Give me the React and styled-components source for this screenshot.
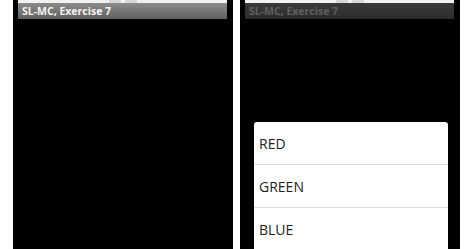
import React from 'react';
import styled, { createGlobalStyle } from 'styled-components';

const GlobalStyle = createGlobalStyle`
  html, body {
    margin: 0;
    padding: 0;
    background: #ffffff;
    overflow: hidden;
  }
`;

const colors = ['RED', 'GREEN', 'BLUE'];

function Phone({ dimmed, children }) {
  return (
    <Screen>
      <StatusStrip>
        <StatusIcons>
          <StatusDot />
          <StatusDot />
        </StatusIcons>
      </StatusStrip>
      <TitleBar $dimmed={dimmed}>SL-MC, Exercise 7</TitleBar>
      <Body>{children}</Body>
    </Screen>
  );
}

function App() {
  return (
    <Page>
      <GlobalStyle />
      <Phone />
      <Phone dimmed>
        <Dialog>
          {colors.map((c) => (
            <Option key={c}>{c}</Option>
          ))}
        </Dialog>
      </Phone>
    </Page>
  );
}

export default App;

const Page = styled.div`
  display: flex;
  gap: 7px;
  padding-left: 13px;
  height: 249px;
  width: 474px;
  box-sizing: border-box;
`;

const Screen = styled.div`
  width: 220px;
  height: 100%;
  background: #000;
  display: flex;
  flex-direction: column;
  padding: 0 6px 0 5px;
  box-sizing: border-box;
  overflow: hidden;
`;

const StatusStrip = styled.div`
  height: 3px;
  background: #f2f2f2;
  display: flex;
  justify-content: center;
`;

const StatusIcons = styled.div`
  display: flex;
  gap: 4px;
`;

const StatusDot = styled.div`
  width: 12px;
  height: 3px;
  background: #d8d8d8;
`;

const TitleBar = styled.div`
  height: 16px;
  display: flex;
  align-items: center;
  padding-left: 4px;
  font-family: 'Open Sans', 'DejaVu Sans', sans-serif;
  font-weight: 700;
  font-size: 10.5px;
  color: ${(p) => (p.$dimmed ? '#5f5f5f' : '#f4f4f4')};
  background: ${(p) =>
    p.$dimmed
      ? 'linear-gradient(#3a3a3a, #2c2c2c)'
      : 'linear-gradient(#8c8c8c, #5f5f5f)'};
  white-space: nowrap;
`;

const Body = styled.div`
  flex: 1;
  display: flex;
  flex-direction: column;
  justify-content: flex-end;
  padding: 0 6px 0 9px;
`;

const Dialog = styled.div`
  background: #fff;
  border-radius: 3px 3px 0 0;
  display: flex;
  flex-direction: column;
  height: 127px;
  overflow: hidden;
`;

const Option = styled.div`
  height: 42px;
  flex-shrink: 0;
  display: flex;
  align-items: center;
  padding-left: 5px;
  font-family: 'Open Sans', 'DejaVu Sans', sans-serif;
  font-size: 14px;
  color: #222;
  border-bottom: 1px solid #dcdcdc;
`;
